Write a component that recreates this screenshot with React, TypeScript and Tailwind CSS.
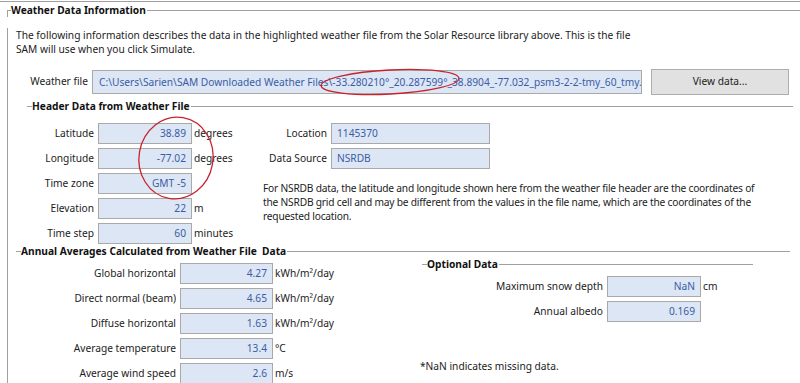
const boxCls = "border border-[#a9a9a9] bg-[#dce6f4] text-[#3b5ca5] h-[21px] leading-[19px] px-[4px] whitespace-nowrap overflow-hidden";

function GroupTitle({ title, className }: { title: string; className?: string }) {
  return (
    <div className={`flex items-center h-[14px] ${className ?? ""}`}>
      <span className="w-[5px] h-px bg-[#a0a0a0]" />
      <span className="font-bold text-[#111] leading-[14px] pr-px">{title}</span>
      <span className="flex-1 h-px bg-[#a0a0a0]" />
    </div>
  );
}

function Row({
  label,
  value,
  unit,
  labelW,
  boxW,
  left,
}: {
  label: string;
  value: string;
  unit?: string;
  labelW: string;
  boxW: string;
  left?: boolean;
}) {
  return (
    <div className="flex items-center h-[21px]">
      <span className={`${labelW} text-right pr-[4px] whitespace-nowrap`}>{label}</span>
      <div className={`${boxW} ${boxCls} ${left ? "text-left pl-[5px]" : "text-right pr-[5px]"}`}>{value}</div>
      {unit && <span className="ml-[2px] whitespace-nowrap">{unit}</span>}
    </div>
  );
}

export default function App() {
  return (
    <div className="relative w-[800px] h-[383px] overflow-hidden bg-white font-['Noto_Sans',sans-serif] text-[10.2px] text-[#1c1c1c]">
      <div className="h-px mt-px bg-[#a0a0a0]" />

      {/* Weather Data Information group */}
      <div className="ml-[7px] mt-px">
        <div className="flex items-center h-[14px]">
          <span className="self-end w-[4px] h-[7px] border-l border-t border-[#a0a0a0]" />
          <span className="font-bold text-[#111] leading-[14px] pr-px">Weather Data Information</span>
          <span className="flex-1 h-px bg-[#a0a0a0]" />
        </div>

        <div className="border-l border-[#a0a0a0] h-[370px]">
          <p className="ml-[8px] mt-[11px] w-[630px] leading-[14px]">
            The following information describes the data in the highlighted weather file from the Solar Resource library above. This is the file SAM will use when you click Simulate.
          </p>

          <div className="flex items-center mt-[13px] h-[26px]">
            <span className="w-[84px] text-right pr-[4px]">Weather file</span>
            <div className="w-[550px] h-[24px] border border-[#a9a9a9] bg-[#dce6f4] text-[#3b5ca5] leading-[22px] pl-[6px] whitespace-nowrap overflow-hidden">
              C:\Users\Sarien\SAM Downloaded Weather Files\-33.280210°_20.287599°_38.8904_-77.032_psm3-2-2-tmy_60_tmy.csv
            </div>
            <button className="ml-[9px] w-[138px] h-[26px] border border-[#adadad] bg-[#e1e1e1] text-[#1c1c1c]">
              View data...
            </button>
          </div>

          {/* Header Data */}
          <GroupTitle title="Header Data from Weather File" className="ml-[19px] mr-[7px] mt-[4px]" />
          <div className="flex mt-[10px]">
            <div className="w-[255px] flex flex-col gap-[4px]">
              <Row label="Latitude" value="38.89" unit="degrees" labelW="w-[90px]" boxW="w-[94px]" />
              <Row label="Longitude" value="-77.02" unit="degrees" labelW="w-[90px]" boxW="w-[94px]" />
              <Row label="Time zone" value="GMT -5" labelW="w-[90px]" boxW="w-[94px]" />
              <Row label="Elevation" value="22" unit="m" labelW="w-[90px]" boxW="w-[94px]" />
              <Row label="Time step" value="60" unit="minutes" labelW="w-[90px]" boxW="w-[94px]" />
            </div>
            <div className="flex-1">
              <div className="flex flex-col gap-[4px]">
                <Row label="Location" value="1145370" labelW="w-[68px]" boxW="w-[159px]" left />
                <Row label="Data Source" value="NSRDB" labelW="w-[68px]" boxW="w-[159px]" left />
              </div>
              <p className="mt-[12px] w-[500px] leading-[14px] tracking-[-0.2px]">
                For NSRDB data, the latitude and longitude shown here from the weather file header are the coordinates of the NSRDB grid cell and may be different from the values in the file name, which are the coordinates of the requested location.
              </p>
            </div>
          </div>

          {/* Annual Averages */}
          <GroupTitle title="Annual Averages Calculated from Weather File  Data" className="ml-[8px] mr-[10px] whitespace-pre" />
          <div className="flex">
            <div className="w-[414px] mt-[5px] flex flex-col gap-[4px]">
              <Row label="Global horizontal" value="4.27" unit="kWh/m²/day" labelW="w-[172px]" boxW="w-[93px]" />
              <Row label="Direct normal (beam)" value="4.65" unit="kWh/m²/day" labelW="w-[172px]" boxW="w-[93px]" />
              <Row label="Diffuse horizontal" value="1.63" unit="kWh/m²/day" labelW="w-[172px]" boxW="w-[93px]" />
              <Row label="Average temperature" value="13.4" unit="°C" labelW="w-[172px]" boxW="w-[93px]" />
              <Row label="Average wind speed" value="2.6" unit="m/s" labelW="w-[172px]" boxW="w-[93px]" />
            </div>
            <div className="w-[331px] -mt-px">
              <GroupTitle title="Optional Data" />
              <div className="mt-[5px] flex flex-col gap-[4px]">
                <Row label="Maximum snow depth" value="NaN" unit="cm" labelW="w-[185px]" boxW="w-[94px]" />
                <Row label="Annual albedo" value="0.169" labelW="w-[185px]" boxW="w-[94px]" />
              </div>
              <p className="mt-[37px] -ml-[2px] leading-[14px]">*NaN indicates missing data.</p>
            </div>
          </div>
        </div>
      </div>

      {/* red annotation marks */}
      <svg className="absolute inset-0 pointer-events-none" width="800" height="383">
        <ellipse cx="390" cy="82" rx="69" ry="12" transform="rotate(-3 390 82)" fill="none" stroke="#c8232c" strokeWidth="1.3" />
        <ellipse cx="176" cy="158" rx="37" ry="41" transform="rotate(10 176 158)" fill="none" stroke="#c8232c" strokeWidth="1.3" />
      </svg>
    </div>
  );
}
